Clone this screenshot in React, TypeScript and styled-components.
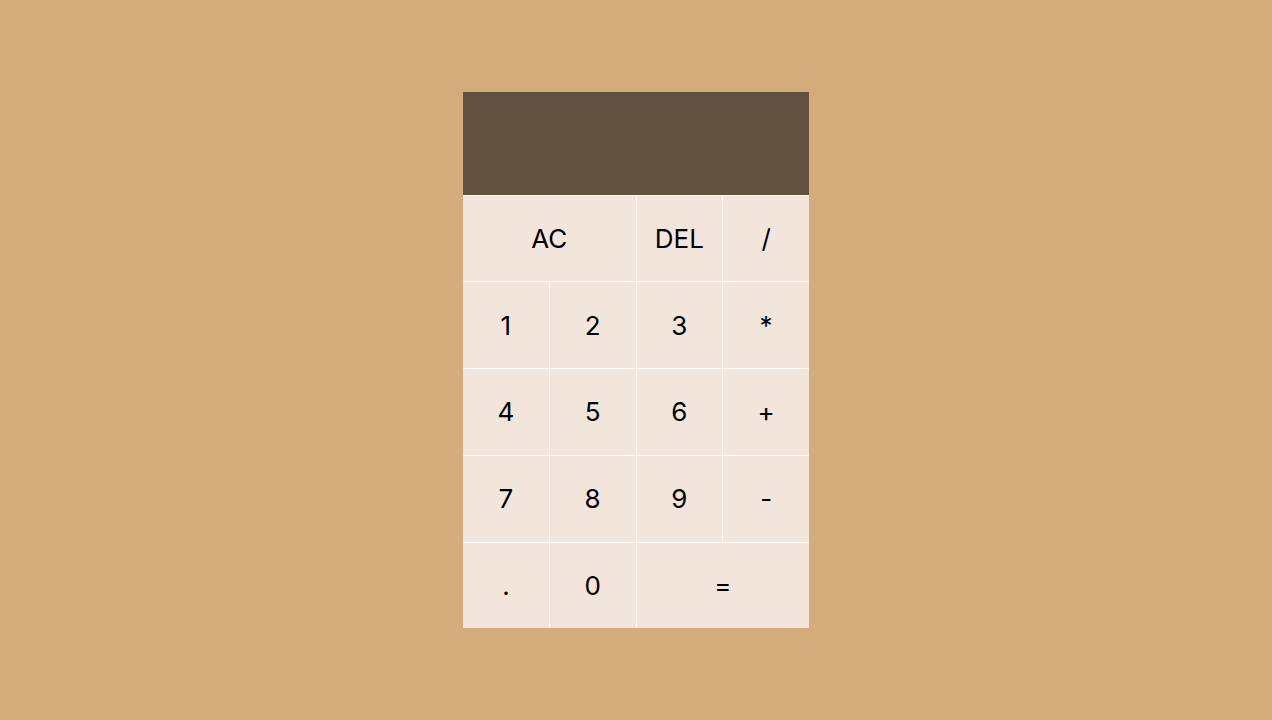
import styled, { createGlobalStyle } from 'styled-components';

const GlobalStyle = createGlobalStyle`
  * {
    box-sizing: border-box;
  }

  body {
    margin: 0;
    background: #d4ac7c;
    font-family: Inter, 'Liberation Sans', Arial, sans-serif;
  }
`;

const Page = styled.div`
  min-height: 100vh;
  display: flex;
  justify-content: center;
  align-items: center;
`;

const Calculator = styled.div`
  width: 346px;
  display: grid;
  grid-template-columns: repeat(4, 1fr);
  grid-template-rows: 103px repeat(5, 85.8px);
  gap: 1px;
  background: #fffaf5;
`;

const Display = styled.div`
  grid-column: 1 / -1;
  background: #615140;
`;

const Key = styled.button<{ $span?: number }>`
  grid-column: span ${(p) => p.$span ?? 1};
  border: none;
  margin: 0;
  padding: 0;
  background: #f2e6dc;
  color: #000;
  font-family: Inter, 'Liberation Sans', Arial, sans-serif;
  font-size: 26px;
  cursor: pointer;
`;

const keys: { label: string; span?: number }[] = [
  { label: 'AC', span: 2 },
  { label: 'DEL' },
  { label: '/' },
  { label: '1' },
  { label: '2' },
  { label: '3' },
  { label: '*' },
  { label: '4' },
  { label: '5' },
  { label: '6' },
  { label: '+' },
  { label: '7' },
  { label: '8' },
  { label: '9' },
  { label: '-' },
  { label: '.' },
  { label: '0' },
  { label: '=', span: 2 },
];

function App() {
  return (
    <>
      <GlobalStyle />
      <Page>
        <Calculator>
          <Display />
          {keys.map((k) => (
            <Key key={k.label} $span={k.span}>
              {k.label}
            </Key>
          ))}
        </Calculator>
      </Page>
    </>
  );
}

export default App;
